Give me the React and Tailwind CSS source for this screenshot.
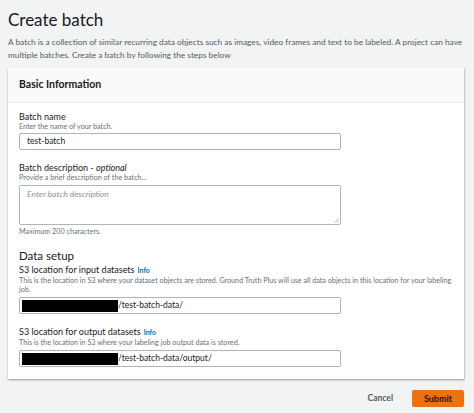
import React from "react";

const font = { fontFamily: "Lato, 'Open Sans', sans-serif" };

function Label({ children, className = "" }) {
  return (
    <div className={"text-[9px] leading-[11px] text-[#16191f] " + className}>{children}</div>
  );
}

function Hint({ children, className = "" }) {
  return (
    <div className={"text-[7.2px] leading-[10px] text-[#687078] " + className}>{children}</div>
  );
}

function Info() {
  return <span className="ml-[3px] text-[7px] font-bold text-[#0073bb]">Info</span>;
}

function Input({ value, redacted }) {
  return (
    <div className="flex h-[17px] w-[322px] items-center rounded-[2px] border border-[#aab7b8] bg-white pl-[2px] text-[8.5px] text-[#16191f]">
      {redacted ? (
        <>
          <div className="h-[12px] w-[96px] bg-black" />
          <span>{value}</span>
        </>
      ) : (
        <span className="pl-[5px]">{value}</span>
      )}
    </div>
  );
}

export default function App() {
  return (
    <div style={font} className="h-[413px] w-[474px] overflow-hidden bg-[#f2f3f3] px-[8px]">
      <div className="mt-[8px] h-[24px] text-[17px] leading-[24px] text-[#16191f]">Create batch</div>
      <div className="mt-[4px] text-[8.3px] leading-[13px] text-[#545b64]">
        A batch is a collection of similar recurring data objects such as images, video frames and text to be labeled. A project can have multiple batches. Create a batch by following the steps below
      </div>
      <div className="mt-[6px] w-[456px] bg-white shadow-[0_1px_2px_rgba(0,28,36,0.3),1px_1px_1px_rgba(0,28,36,0.1)]">
        <div className="flex h-[35px] items-center border-b border-[#eaeded] bg-[#fafafa] px-[11px] text-[10.5px] font-bold text-[#16191f]">
          Basic Information
        </div>
        <div className="px-[11px] pt-[8px] pb-[12px]">
          <Label>Batch name</Label>
          <Hint>Enter the name of your batch.</Hint>
          <div className="mt-[1px]">
            <Input value="test-batch" />
          </div>

          <Label className="mt-[12px]">
            Batch description - <i>optional</i>
          </Label>
          <Hint>Provide a brief description of the batch...</Hint>
          <div className="relative mt-[2px] h-[40px] w-[322px] rounded-[2px] border border-[#aab7b8] bg-white px-[7px] pt-[3px] text-[8.5px] italic leading-[11px] text-[#879596]">
            Enter batch description
            <svg className="absolute right-[1px] bottom-[1px]" width="5" height="5" viewBox="0 0 5 5">
              <path d="M4.5 0.5 L0.5 4.5 M4.5 2.5 L2.5 4.5" stroke="#999" strokeWidth="0.6" />
            </svg>
          </div>
          <Hint className="mt-[2px]">Maximum 200 characters.</Hint>

          <div className="mt-[11px] text-[11.5px] leading-[16px] text-[#16191f]">Data setup</div>
          <Label>
            S3 location for input datasets<Info />
          </Label>
          <div className="text-[7.2px] leading-[9px] text-[#687078]">
            This is the location in S3 where your dataset objects are stored. Ground Truth Plus will use all data objects in this location for your labeling job.
          </div>
          <div className="mt-[3px]">
            <Input value="/test-batch-data/" redacted />
          </div>

          <Label className="mt-[12px]">
            S3 location for output datasets<Info />
          </Label>
          <Hint>This is the location in S3 where your labeling job output data is stored.</Hint>
          <div className="mt-[2px]">
            <Input value="/test-batch-data/output/" redacted />
          </div>
        </div>
      </div>
      <div className="mt-[11px] flex w-[456px] items-center justify-end">
        <span className="mr-[19px] text-[8.5px] font-bold text-[#545b64]">Cancel</span>
        <div className="flex h-[17px] w-[52px] items-center justify-center rounded-[2px] bg-[#ec7211] text-[9px] font-bold text-[#16191f]">
          Submit
        </div>
      </div>
    </div>
  );
}
